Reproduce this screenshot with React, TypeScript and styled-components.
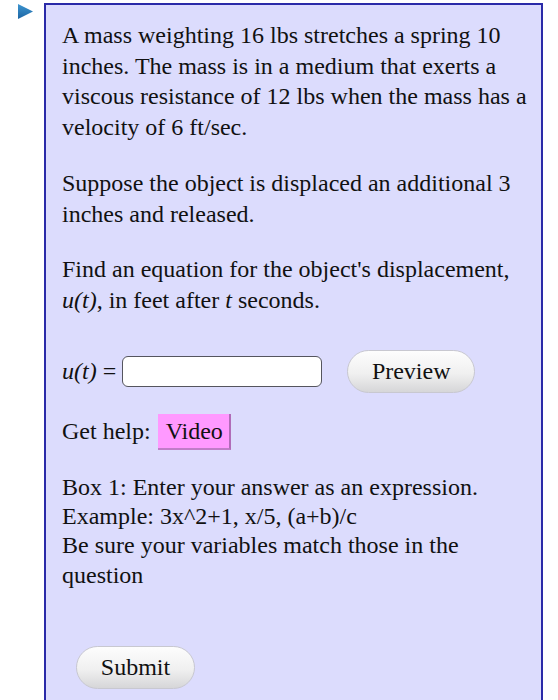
import styled, { createGlobalStyle } from "styled-components";

const Global = createGlobalStyle`
  html, body {
    margin: 0;
    padding: 0;
    background: #fff;
  }
  body {
    font-family: "Liberation Serif", "Times New Roman", serif;
    color: #111;
  }
`;

const Page = styled.div`
  display: flex;
  align-items: flex-start;
  padding: 3px 0 0 18px;
  height: 697px;
  overflow: hidden;
`;

const Marker = styled.svg`
  width: 15px;
  height: 15px;
  margin-top: 1px;
  flex: none;
`;

const Card = styled.div`
  box-sizing: border-box;
  margin-left: 11px;
  width: 499px;
  min-height: 720px;
  background: #dcdcfd;
  border: 2px solid #2a2aa8;
  border-bottom: none;
  padding: 15px 12px 0 16px;
  font-size: 24px;
  line-height: 30.7px;
`;

const Para = styled.p<{ gap?: number; lh?: number }>`
  margin: 0 0 ${({ gap }) => gap ?? 25}px;
  ${({ lh }) => lh && `line-height: ${lh}px;`}
`;

const AnswerRow = styled.div`
  display: flex;
  align-items: center;
  height: 43px;
  margin: 34px 0 21px;
`;

const Label = styled.span`
  white-space: pre;
`;

const Field = styled.div`
  box-sizing: border-box;
  width: 200px;
  height: 31px;
  margin-left: 6px;
  background: #fff;
  border: 1.5px solid #55555e;
  border-radius: 6px;
`;

const PillButton = styled.button<{ w: number }>`
  width: ${({ w }) => w}px;
  height: 43px;
  border-radius: 22px;
  border: 1px solid #c8c8d0;
  background: linear-gradient(#fdfdfd, #f0f0f0 55%, #d6d6d8);
  font-family: inherit;
  font-size: 24px;
  color: #111;
  padding: 0;
`;

const PreviewButton = styled(PillButton)`
  margin-left: 25px;
`;

const HelpRow = styled.div`
  display: flex;
  align-items: center;
  height: 36px;
  margin-bottom: 23px;
`;

const VideoTag = styled.span`
  margin-left: 7px;
  padding: 2px 6px 2px 8px;
  background: #ff99ff;
  border-right: 2px solid #b06cb8;
  border-bottom: 2px solid #c07cc8;
  line-height: 30px;
`;

const SubmitWrap = styled.div`
  padding: 56px 0 0 14px;
`;

export default function App() {
  return (
    <>
      <Global />
      <Page>
        <Marker viewBox="0 0 15 15">
          <defs>
            <linearGradient id="tri" x1="0" y1="0" x2="0" y2="1">
              <stop offset="0" stopColor="#3d95d0" />
              <stop offset="1" stopColor="#1c65a3" />
            </linearGradient>
          </defs>
          <polygon points="0,0 15,7.5 0,15" fill="url(#tri)" />
        </Marker>
        <Card>
          <Para>
            A mass weighting 16 lbs stretches a spring 10 inches. The mass is in
            a medium that exerts a viscous resistance of 12 lbs when the mass
            has a velocity of 6 ft/sec.
          </Para>
          <Para>
            Suppose the object is displaced an additional 3 inches and released.
          </Para>
          <Para gap={0}>
            Find an equation for the object's displacement, <i>u(t)</i>, in feet
            after <i>t</i> seconds.
          </Para>
          <AnswerRow>
            <Label>
              <i>u(t)</i> =
            </Label>
            <Field />
            <PreviewButton w={128}>Preview</PreviewButton>
          </AnswerRow>
          <HelpRow>
            Get help:
            <VideoTag>Video</VideoTag>
          </HelpRow>
          <Para gap={0} lh={29.4}>
            Box 1: Enter your answer as an expression.
            <br />
            Example: 3x^2+1, x/5, (a+b)/c
            <br />
            Be sure your variables match those in the question
          </Para>
          <SubmitWrap>
            <PillButton w={119}>Submit</PillButton>
          </SubmitWrap>
        </Card>
      </Page>
    </>
  );
}
